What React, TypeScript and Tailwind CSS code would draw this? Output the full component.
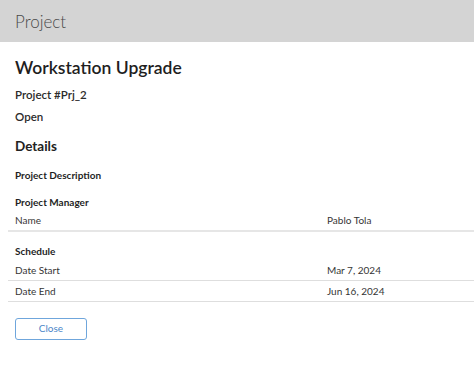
import React from 'react';

const font = { fontFamily: 'Lato, "Noto Sans", sans-serif' };

const DetailRow = ({ label, value, thick }: { label: string; value: string; thick?: boolean }) => (
  <div
    className={`ml-[8px] flex h-[21px] items-center text-[10px] text-[#353535] ${
      thick ? 'border-b-2 border-[#e6e6e6]' : 'border-b border-[#dedede]'
    }`}
  >
    <span className="w-[319px] pl-[7px]">{label}</span>
    <span>{value}</span>
  </div>
);

const SectionLabel = ({ children, className = '' }: { children: React.ReactNode; className?: string }) => (
  <div className={`flex h-[18px] items-center px-[15px] text-[10px] font-bold text-[#1f1f1f] ${className}`}>{children}</div>
);

export default function App() {
  return (
    <div className="min-h-[391px] w-[474px] bg-white" style={font}>
      <header className="flex h-[42px] items-center bg-[#d4d4d4] px-[15px] pt-[2px] text-[17px] font-light text-[#4a4a4a]">
        Project
      </header>

      <div className="pt-[12px]">
        <h1 className="flex h-[28px] items-center px-[15px] text-[17.5px] font-semibold text-[#1e1e1e]">
          Workstation Upgrade
        </h1>
        <div className="mt-[2px] flex h-[22px] items-center px-[15px] text-[11.5px] font-semibold text-[#2b2b2b]">
          Project #Prj_2
        </div>
        <div className="flex h-[22px] items-center px-[15px] text-[11.5px] font-semibold text-[#2b2b2b]">Open</div>

        <h2 className="mt-[6px] flex h-[24px] items-center px-[15px] text-[13.5px] font-bold text-[#222]">Details</h2>

        <SectionLabel className="mt-[8px]">Project Description</SectionLabel>

        <SectionLabel className="mt-[9px]">Project Manager</SectionLabel>
        <DetailRow label="Name" value="Pablo Tola" thick />

        <SectionLabel className="mt-[10px]">Schedule</SectionLabel>
        <DetailRow label="Date Start" value="Mar 7, 2024" />
        <DetailRow label="Date End" value="Jun 16, 2024" />

        <div className="px-[15px] pt-[12px]">
          <button className="h-[22px] w-[72px] rounded-[3px] border border-[#6fa6dc] text-[10px] text-[#4a86c8]">
            Close
          </button>
        </div>
      </div>
    </div>
  );
}
